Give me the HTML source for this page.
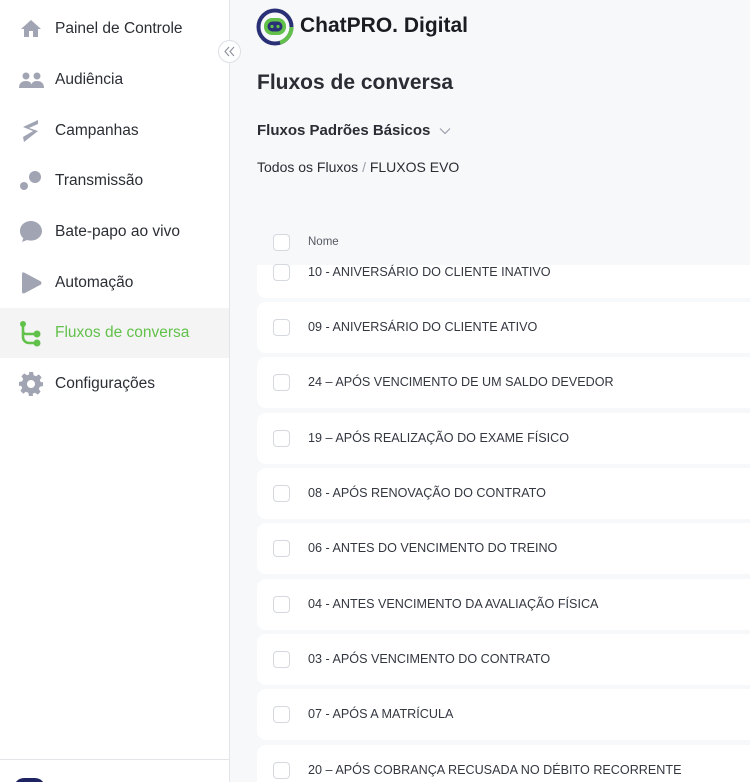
<!DOCTYPE html>
<html><head><meta charset="utf-8"><style>
*{box-sizing:border-box;margin:0;padding:0}
html,body{width:750px;height:782px;overflow:hidden}
body{background:#f7f8fa;font-family:"Liberation Sans",sans-serif;color:#2a2d33;position:relative}
.sb{position:absolute;left:0;top:0;width:230px;height:782px;background:#fff;border-right:1px solid #e3e5e9;overflow:hidden}
.nav{position:absolute;left:0;width:229px;height:50px;display:flex;align-items:center;font-size:15.5px;color:#2b2e34}
.nav svg{position:absolute;left:19px;top:13px}
.nav span{position:absolute;left:55px}
.act{background:#f4f4f5;color:#62c14a}
.col{position:absolute;left:218px;top:40px;width:23px;height:23px;border-radius:50%;background:#fff;border:1px solid #dcdfe4}
.main{position:absolute;left:230px;top:0;width:520px;height:782px;overflow:hidden}
.card{position:absolute;left:27px;width:520px;height:51px;background:#fff;border-radius:9px}
.cb{position:absolute;left:43px;width:17px;height:17px;border:1px solid #d5d8de;border-radius:4px;background:#fff}
.rt{position:absolute;left:78px;font-size:12.6px;color:#333740;white-space:nowrap}
</style></head><body>
<div class="sb">
<div class="nav" style="top:4px"><svg width="24" height="24" viewBox="0 0 24 24"><path d="M12 3L2 12h3v8h5v-6h4v6h5v-8h3z" fill="#a1a4b3"/></svg><span>Painel de Controle</span></div>
<div class="nav" style="top:55px"><svg width="26" height="24" viewBox="0 0 26 24"><circle cx="7" cy="8" r="3.5" fill="#a1a4b3"/><circle cx="18" cy="8" r="3.5" fill="#a1a4b3"/><path d="M0 20c0-5 3-7 7-7s6 2 6 7zM12 20c0-5 2-7 6-7s7 2 7 7z" fill="#a1a4b3"/></svg><span>Audiência</span></div>
<div class="nav" style="top:106px"><svg width="24" height="24" viewBox="0 0 24 24"><path d="M19 1L4 8l10 4-10 6 1 5 14-11-9-3 9-4z" fill="#a1a4b3"/></svg><span>Campanhas</span></div>
<div class="nav" style="top:156px"><svg width="24" height="24" viewBox="0 0 24 24"><circle cx="16" cy="8" r="6" fill="#a1a4b3"/><circle cx="5" cy="17" r="4" fill="#a1a4b3"/></svg><span>Transmissão</span></div>
<div class="nav" style="top:207px"><svg width="24" height="24" viewBox="0 0 24 24"><path d="M12 1C5.5 1 1 5.5 1 11c0 3 1.3 5.5 3.3 7.2L3 22l5-2c1.2.4 2.5.6 4 .6 6 0 11-4.3 11-9.6S18 1 12 1z" fill="#a1a4b3"/></svg><span>Bate-papo ao vivo</span></div>
<div class="nav" style="top:258px"><svg width="24" height="24" viewBox="0 0 24 24"><path d="M3 3c0-2 1-2 3-1l15 8c2 1 2 3 0 4L6 22c-2 1-3 0-3-1z" fill="#a1a4b3"/></svg><span>Automação</span></div>
<div class="nav act" style="top:308px"><svg width="24" height="26" viewBox="0 0 24 26"><circle cx="4" cy="3" r="3" fill="#62c14a"/><circle cx="18" cy="13" r="3.5" fill="#62c14a"/><circle cx="18" cy="22" r="3.5" fill="#62c14a"/><path d="M4 3v13a6 6 0 006 6h8M4 10a3 3 0 003 3h11" stroke="#62c14a" stroke-width="2.6" fill="none"/></svg><span>Fluxos de conversa</span></div>
<div class="nav" style="top:359px"><svg width="24" height="24" viewBox="0 0 24 24"><path d="M10 0h4l.7 3.2 2.3 1 2.8-1.8 2.8 2.8-1.8 2.8 1 2.3L24 10v4l-3.2.7-1 2.3 1.8 2.8-2.8 2.8-2.8-1.8-2.3 1L14 24h-4l-.7-3.2-2.3-1-2.8 1.8-2.8-2.8 1.8-2.8-1-2.3L0 14v-4l3.2-.7 1-2.3L2.4 4.2l2.8-2.8L8 3.2l2.3-1z" fill="#a1a4b3"/><circle cx="12" cy="12" r="4" fill="#fff"/></svg><span>Configurações</span></div>
<div style="position:absolute;left:0;top:759px;width:229px;height:1px;background:#e3e5e9"></div>
<div style="position:absolute;left:14px;top:778px;width:31px;height:20px;border-radius:15px;background:#1e2463"></div>
</div>
<div class="col"><svg width="21" height="21" viewBox="0 0 21 21"><path d="M10 6l-4 4.5 4 4.5M15 6l-4 4.5 4 4.5" stroke="#8a8f99" stroke-width="1.1" fill="none"/></svg></div>
<div class="main">
<svg style="position:absolute;left:26px;top:8px" width="38" height="38" viewBox="0 0 38 38"><circle cx="19" cy="19" r="16.5" stroke="#2a3075" stroke-width="4" fill="none"/><path d="M35.5 19A16.5 16.5 0 0 1 24 34.7" stroke="#62c14a" stroke-width="4" fill="none"/><rect x="8" y="10" width="22" height="17" rx="8" fill="#62c14a"/><rect x="11.5" y="13.5" width="15" height="10" rx="5" fill="#2a3075"/><circle cx="16" cy="18.5" r="1.6" fill="#62c14a"/><circle cx="22" cy="18.5" r="1.6" fill="#62c14a"/></svg>
<div style="position:absolute;left:70px;top:14px;font-size:21px;font-weight:bold;color:#1a1c22">ChatPRO. Digital</div>
<div style="position:absolute;left:27px;top:71px;font-size:21px;font-weight:bold;color:#2a2d33">Fluxos de conversa</div>
<div style="position:absolute;left:27px;top:122px;font-size:15px;font-weight:bold;color:#2a2d33">Fluxos Padrões Básicos <svg width="12" height="8" viewBox="0 0 12 8" style="margin-left:4px"><path d="M1 1.5l5 5 5-5" stroke="#9aa0aa" stroke-width="1.2" fill="none"/></svg></div>
<div style="position:absolute;left:27px;top:159px;font-size:14px;color:#2a2d33">Todos os Fluxos <span style="color:#9aa0aa">/</span> FLUXOS EVO</div>
<div class="cb" style="top:234px"></div>
<div style="position:absolute;left:78px;top:236px;font-size:11.5px;color:#555a63">Nome</div>
<div class="card" style="top:247px;clip-path:inset(18px 0 0 0)"></div>
<div class="cb" style="top:264px"></div><div class="rt" style="top:265px">10 - ANIVERSÁRIO DO CLIENTE INATIVO</div>
<div class="card" style="top:302px"></div><div class="cb" style="top:319px"></div><div class="rt" style="top:320px">09 - ANIVERSÁRIO DO CLIENTE ATIVO</div>
<div class="card" style="top:357px"></div><div class="cb" style="top:374px"></div><div class="rt" style="top:375px">24 – APÓS VENCIMENTO DE UM SALDO DEVEDOR</div>
<div class="card" style="top:413px"></div><div class="cb" style="top:430px"></div><div class="rt" style="top:431px">19 – APÓS REALIZAÇÃO DO EXAME FÍSICO</div>
<div class="card" style="top:468px"></div><div class="cb" style="top:485px"></div><div class="rt" style="top:486px">08 - APÓS RENOVAÇÃO DO CONTRATO</div>
<div class="card" style="top:523px"></div><div class="cb" style="top:540px"></div><div class="rt" style="top:541px">06 - ANTES DO VENCIMENTO DO TREINO</div>
<div class="card" style="top:579px"></div><div class="cb" style="top:596px"></div><div class="rt" style="top:597px">04 - ANTES VENCIMENTO DA AVALIAÇÃO FÍSICA</div>
<div class="card" style="top:634px"></div><div class="cb" style="top:651px"></div><div class="rt" style="top:652px">03 - APÓS VENCIMENTO DO CONTRATO</div>
<div class="card" style="top:689px"></div><div class="cb" style="top:706px"></div><div class="rt" style="top:707px">07 - APÓS A MATRÍCULA</div>
<div class="card" style="top:745px"></div><div class="cb" style="top:762px"></div><div class="rt" style="top:763px">20 – APÓS COBRANÇA RECUSADA NO DÉBITO RECORRENTE</div>
</div>
</body></html>
